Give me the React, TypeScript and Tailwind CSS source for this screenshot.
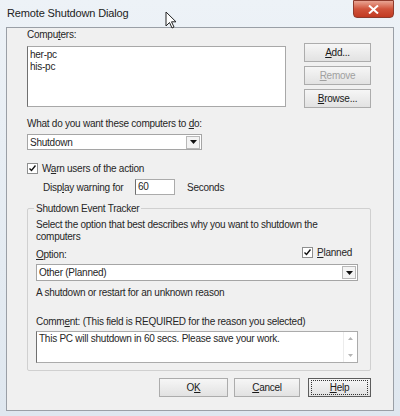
import React from 'react';

const Btn = ({ children, disabled, focus, className = '' }: { children: React.ReactNode; disabled?: boolean; focus?: boolean; className?: string }) => (
  <div
    className={`h-[19px] flex items-center justify-center border bg-gradient-to-b from-[#f6f6f6] to-[#e2e2e2] ${
      focus ? 'border-[#5c5c5c]' : 'border-[#acacac]'
    } ${disabled ? 'text-[#a0a0a0]' : 'text-[#1a1a1a]'} ${className}`}
  >
    {focus ? (
      <div className="w-[calc(100%-4px)] h-[15px] border border-dotted border-[#333] flex items-center justify-center">{children}</div>
    ) : (
      children
    )}
  </div>
);

const DropArrow = () => (
  <div className="w-[14px] h-[13px] border border-[#b8b8b8] bg-[#f3f3f3] flex items-center justify-center mr-[1px]">
    <svg width="7" height="4" viewBox="0 0 7 4">
      <path d="M0 0h7L3.5 4z" fill="#111" />
    </svg>
  </div>
);

const Check = () => (
  <div className="w-[11px] h-[11px] border border-[#8e8f8f] bg-white flex items-center justify-center">
    <svg width="7" height="7" viewBox="0 0 7 7">
      <path d="M0.5 3.5l2 2l4-5" stroke="#111" strokeWidth="1.4" fill="none" />
    </svg>
  </div>
);

export default function App() {
  return (
    <div
      className="relative w-[400px] h-[416px] overflow-hidden bg-gradient-to-b from-[#edf2f7] to-[#dfe7ef] text-[10px] tracking-[-0.25px] text-[#262626]"
      style={{ fontFamily: '"Liberation Sans", Arial, sans-serif' }}
    >
      {/* title bar */}
      <div className="h-[27px] flex items-center pl-[7px] pb-[1px] text-[11px] tracking-[-0.15px] text-[#222]">Remote Shutdown Dialog</div>
      <div className="absolute right-[6px] top-0 w-[41px] h-[18px] rounded-b-[4px] border border-[#8e3a2c] bg-gradient-to-b from-[#e8a493] via-[#d0533b] to-[#c23a22] flex items-center justify-center">
        <svg width="11" height="9" viewBox="0 0 11 9">
          <path d="M1 0.5l9 8M10 0.5l-9 8" stroke="#fff" strokeWidth="2" />
        </svg>
      </div>
      {/* cursor */}
      <svg className="absolute left-[165px] top-[11px]" width="12" height="18" viewBox="0 0 12 18">
        <path d="M1 1v14l3.5-3.5 2.5 5.5 2-1-2.5-5.2H11z" fill="#fff" stroke="#222" strokeWidth="1" />
      </svg>

      {/* client area */}
      <div className="mx-[6px] h-[384px] border border-[#9a9fa6] bg-[#f0f0f0] pl-[20px]">
        <div className="h-[14px] leading-[14px]">
          Compu<u>t</u>ers:
        </div>
        <div className="flex mt-[4px]">
          <div className="w-[259px] h-[61px] bg-white border border-[#a8a8a8] border-l-[#707070] pl-[2px] pt-[2px] leading-[12px]">
            <div>her-pc</div>
            <div>his-pc</div>
          </div>
          <div className="ml-[18px] -mt-[3px] flex flex-col gap-[4px] w-[67px]">
            <Btn>
              <u>A</u>dd...
            </Btn>
            <Btn disabled>
              <u>R</u>emove
            </Btn>
            <Btn>
              <u>B</u>rowse...
            </Btn>
          </div>
        </div>

        <div className="mt-[9px] h-[13px] leading-[13px]">
          What do you want these computers to <u>d</u>o:
        </div>
        <div className="mt-[4px] w-[175px] h-[16px] bg-white border border-[#a5a5a5] flex items-center justify-between pl-[2px]">
          <span>Shutdown</span>
          <DropArrow />
        </div>

        <div className="mt-[12px] flex items-center h-[12px]">
          <Check />
          <span className="ml-[4px]">
            W<u>a</u>rn users of the action
          </span>
        </div>
        <div className="mt-[5px] flex items-center h-[16px] pl-[16px]">
          <span className="w-[92px]">
            Disp<u>l</u>ay warning for
          </span>
          <div className="w-[40px] h-[16px] bg-white border border-[#ababab] border-l-[#6f6f6f] pl-[2px] leading-[14px]">60</div>
          <span className="ml-[12px]">Seconds</span>
        </div>

        {/* group box */}
        <div className="relative mt-[13px] w-[344px] h-[163px] border border-[#d0d0d0] rounded-[2px] px-[8px] pt-[10px]">
          <div className="absolute left-[6px] -top-[7px] px-[2px] bg-[#f0f0f0] leading-[13px]">Shutdown Event Tracker</div>
          <div className="leading-[12px]">
            Select the option that best describes why you want to shutdown the
            <br />
            computers
          </div>
          <div className="flex items-end justify-between h-[18px]">
            <span className="leading-[13px]">
              <u>O</u>ption:
            </span>
            <div className="flex items-center mb-[1px] mr-[10px]">
              <Check />
              <span className="ml-[4px]">
                <u>P</u>lanned
              </span>
            </div>
          </div>
          <div className="mt-[3px] w-[322px] h-[17px] bg-white border border-[#a5a5a5] flex items-center justify-between pl-[2px]">
            <span>Other (Planned)</span>
            <DropArrow />
          </div>
          <div className="mt-[5px] leading-[13px]">A shutdown or restart for an unknown reason</div>
          <div className="mt-[16px] leading-[13px]">
            Comm<u>e</u>nt: (This field is REQUIRED for the reason you selected)
          </div>
          <div className="mt-[3px] w-[322px] h-[32px] bg-white border border-[#ababab] border-l-[#6f6f6f] flex justify-between">
            <span className="pl-[2px] pt-[1px] leading-[12px]">This PC will shutdown in 60 secs. Please save your work.</span>
            <div className="w-[14px] h-full border-l border-[#ececec] flex flex-col items-center justify-between py-[5px]">
              <svg width="5" height="3" viewBox="0 0 5 3">
                <path d="M0 3h5L2.5 0z" fill="#b5b5b5" />
              </svg>
              <svg width="5" height="3" viewBox="0 0 5 3">
                <path d="M0 0h5L2.5 3z" fill="#b5b5b5" />
              </svg>
            </div>
          </div>
        </div>

        {/* bottom buttons */}
        <div className="flex mt-[7px] pl-[132px] gap-[6px]">
          <Btn className="w-[69px]">
            O<u>K</u>
          </Btn>
          <Btn className="w-[66px]">
            <u>C</u>ancel
          </Btn>
          <Btn focus className="w-[63px] ml-[2px]">
            <u>H</u>elp
          </Btn>
        </div>
      </div>
    </div>
  );
}
